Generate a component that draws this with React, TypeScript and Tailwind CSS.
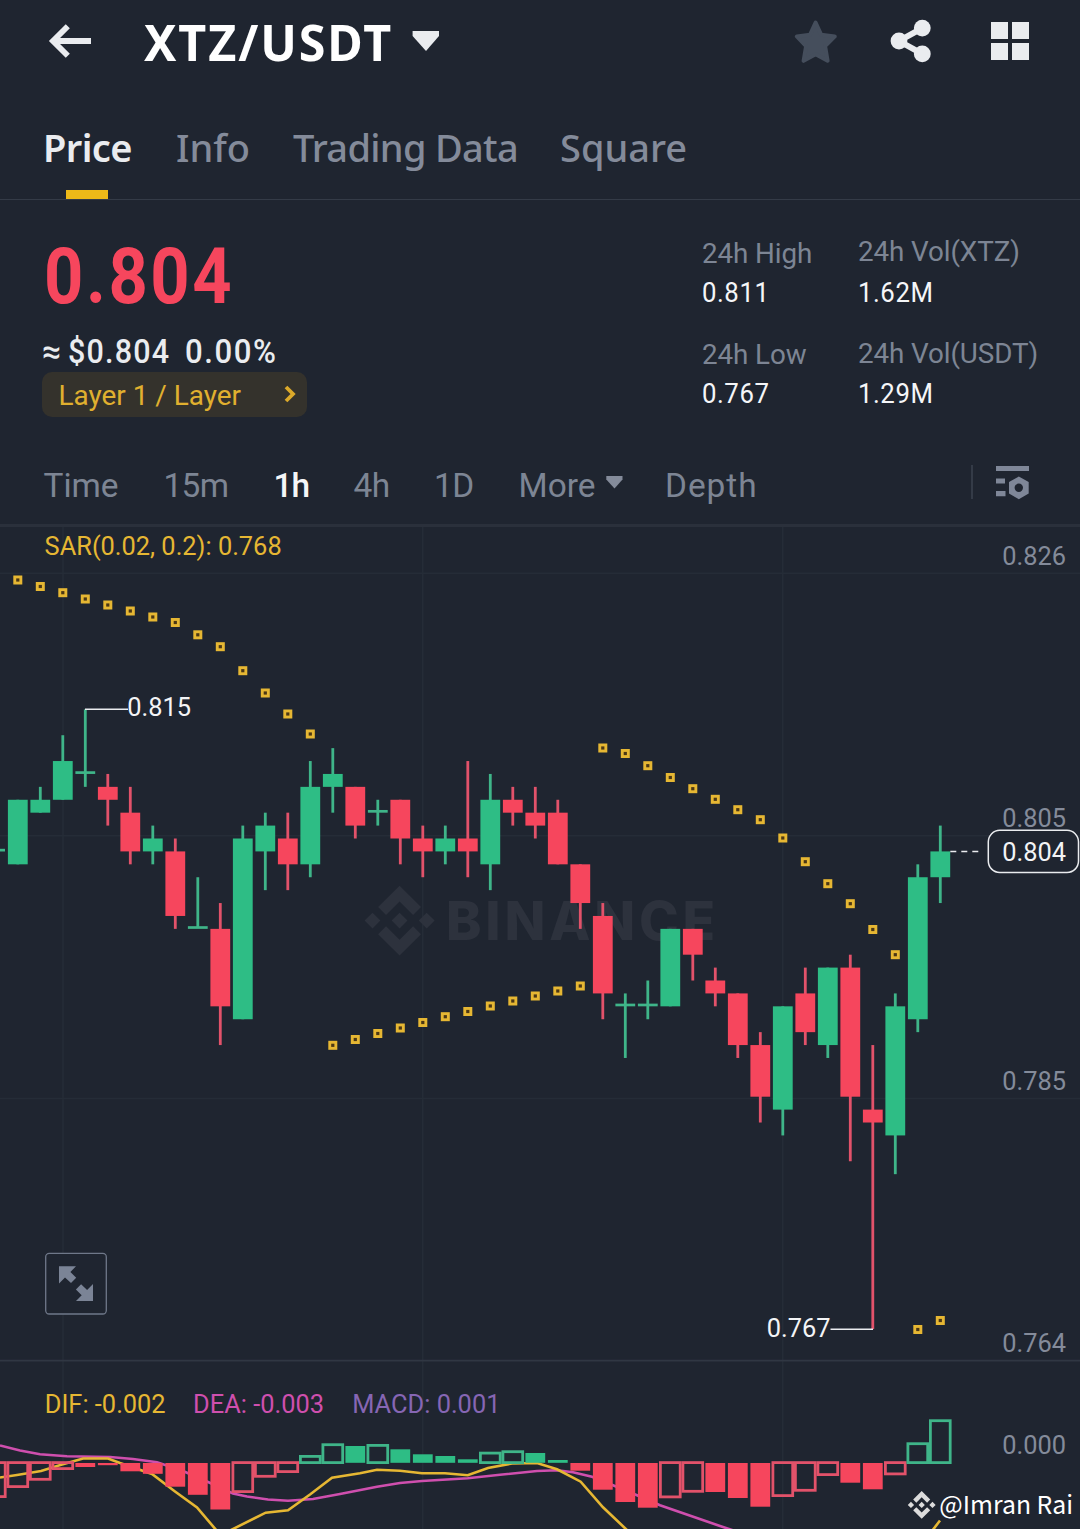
import type { ReactNode } from "react";

const BG = "#1f2530";
const GREEN = "#2ebd85";
const GREEN_LINE = "#3fb589";
const RED = "#f6465d";
const RED_LINE = "#e2526a";
const YELLOW = "#e6b733";
const MAGENTA = "#cf4fae";
const MUTED = "#848b9a";

const BINANCE_MARK =
  "M16.624 13.9202l2.7175 2.7154-7.353 7.353-7.353-7.352 2.7175-2.7164 4.6355 4.6595 4.6356-4.6595zm4.6366-4.6366L24 12l-2.7154 2.7164L18.5682 12l2.6924-2.7164zm-9.272.001l2.7163 2.6914-2.7164 2.7174v-.001L9.2721 12l2.7164-2.7154zm-9.2722-.001L5.4088 12l-2.6914 2.6924L0 12l2.7164-2.7164zM11.9885.0115l7.353 7.329-2.7174 2.7154-4.6356-4.6356-4.6355 4.6595-2.7174-2.7154 7.353-7.353z";

// [direction, body top, body bottom, high, low], prices in thousandths
type Candle = ["u" | "d", number, number, number, number];
const candles: Candle[] = [
  ["u", 808, 803, 808, 803],
  ["u", 808, 807, 809, 807],
  ["u", 811, 808, 813, 808],
  ["u", 810, 810, 815, 809],
  ["d", 809, 808, 810, 806],
  ["d", 807, 804, 809, 803],
  ["u", 805, 804, 806, 803],
  ["d", 804, 799, 805, 798],
  ["u", 798, 798, 802, 798],
  ["d", 798, 792, 800, 789],
  ["u", 805, 791, 806, 791],
  ["u", 806, 804, 807, 801],
  ["d", 805, 803, 807, 801],
  ["u", 809, 803, 811, 802],
  ["u", 810, 809, 812, 807],
  ["d", 809, 806, 809, 805],
  ["u", 807, 807, 808, 806],
  ["d", 808, 805, 808, 803],
  ["d", 805, 804, 806, 802],
  ["u", 805, 804, 806, 803],
  ["d", 805, 804, 811, 802],
  ["u", 808, 803, 810, 801],
  ["d", 808, 807, 809, 806],
  ["d", 807, 806, 809, 805],
  ["d", 807, 803, 808, 803],
  ["d", 803, 800, 803, 798],
  ["d", 799, 793, 800, 791],
  ["u", 792, 792, 793, 788],
  ["u", 792, 792, 794, 791],
  ["u", 798, 792, 798, 792],
  ["d", 798, 796, 798, 794],
  ["d", 794, 793, 795, 792],
  ["d", 793, 789, 793, 788],
  ["d", 789, 785, 790, 783],
  ["u", 792, 784, 792, 782],
  ["d", 793, 790, 795, 789],
  ["u", 795, 789, 795, 788],
  ["d", 795, 785, 796, 780],
  ["d", 784, 783, 789, 767],
  ["u", 792, 782, 793, 779],
  ["u", 802, 791, 803, 790],
  ["u", 804, 802, 806, 800],
];

const sar = [
  580, 586.5, 592.7, 599, 605, 611, 617, 622.5, 634.8, 646.7, 670.7, 693, 714, 734, 1045.3, 1039.5, 1033.5, 1028,
  1022.5, 1016.7, 1011.5, 1006, 1001, 996, 991, 986, 748, 753.5, 765.7, 777.5, 788.7, 799.3, 809.7, 819.7, 838, 861.7,
  883.7, 903.7, 929.5, 954.7, 1329.5, 1320.5,
];

// [filled?, outer edge y]; bars grow from the zero line
const macd: [boolean, number][] = [
  [false, 1498], [false, 1488], [false, 1480.7], [false, 1470], [true, 1467], [true, 1465.2], [true, 1471.3],
  [true, 1473.8], [true, 1486.7], [true, 1494.8], [true, 1509.5], [false, 1493], [false, 1477.7], [false, 1473],
  [false, 1455], [false, 1443.3], [true, 1446], [false, 1444], [true, 1449.3], [true, 1454.3], [true, 1456],
  [true, 1459.3], [false, 1451.7], [false, 1450.3], [true, 1453], [true, 1460], [true, 1470.7], [true, 1489.7],
  [true, 1502], [true, 1507.7], [false, 1498.3], [false, 1492.7], [true, 1492], [true, 1498], [true, 1506.7],
  [false, 1497], [false, 1491.7], [false, 1476], [true, 1482.7], [true, 1489.3], [false, 1475.3], [false, 1442.3],
  [false, 1419.3],
];

const dif =
  "0,1477.5 17,1475 41,1471 62,1464.5 83,1458.5 108,1458.5 120,1463 152,1474 175,1491.5 197,1507.5 217,1531 M 229,1531 265.7,1512.7 288,1510.3 310,1494.5 332,1477.7 360,1473.3 377,1469.7 400,1470.7 422,1473.3 445,1473.3 467.7,1475.3 488,1468 512,1463.5 537,1463 557,1469.3 580.7,1481.7 603,1507.3 628,1531 M 932,1531 940,1520.5";
const dea =
  "0,1445.5 20,1450.5 40,1454.3 67,1456.3 110,1457 133,1459 157,1462.3 183,1471 208,1482 233,1493.5 247,1496.5 268,1499.5 288,1500.7 313,1499 340,1494 377,1486.7 400,1483 422,1481 467.7,1478.3 500,1474.8 537,1471 557,1470.3 573,1472.3 592,1476.7 613,1485.3 637,1495.3 660,1505.3 720,1526 735,1531";

const xAt = (i: number) => 17.8 + 22.5 * i;
const yAt = (p: number) => 709.4 + (815 - p) * 12.91;

function Candles() {
  return (
    <g>
      {candles.map(([dir, top, bottom, high, low], i) => {
        const x = xAt(i);
        const fill = dir === "u" ? GREEN : RED;
        const line = dir === "u" ? GREEN_LINE : RED_LINE;
        const flat = top === bottom;
        const y = flat ? yAt(top) - 2.7 : yAt(top);
        return (
          <g key={i}>
            <rect x={x - 1.4} y={yAt(high)} width={2.8} height={yAt(low) - yAt(high) - (flat && low === bottom ? 1 : 0)} fill={line} />
            <rect x={x - 9.9} y={y} width={19.8} height={flat ? 2.7 : yAt(bottom) - yAt(top)} fill={flat ? line : fill} />
          </g>
        );
      })}
      <rect x={0} y={848.8} width={5} height={2.7} fill={GREEN_LINE} />
    </g>
  );
}

function Macd() {
  return (
    <g>
      {macd.map(([filled, edge], n) => {
        const x = xAt(n - 1);
        const up = edge < 1462;
        if (filled) {
          const top = up ? edge : 1463;
          return <rect key={n} x={x - 9.9} y={top} width={19.8} height={Math.abs((up ? 1462.8 : edge) - top)} fill={up ? GREEN : RED} />;
        }
        const top = up ? edge + 1.4 : 1462.6;
        const bottom = up ? 1462.6 : edge - 1.4;
        return (
          <rect key={n} x={x - 9.9} y={top} width={19.8} height={bottom - top} fill="none" stroke={up ? GREEN_LINE : RED_LINE} strokeWidth={2.8} />
        );
      })}
    </g>
  );
}

function Chart() {
  return (
    <svg viewBox="0 527 1080 1002" className="block h-[1002px] w-[1080px] font-['Roboto',sans-serif] text-[25.4px]">
      <g stroke="#252c37" strokeWidth={1.6}>
        <path d="M63 527V1529M422.7 527V1529M782.7 527V1529" />
        <path d="M0 573.2H1080M0 835.8H1080M0 1098.5H1080" />
      </g>
      <path d="M0 1360.6H1080" stroke="#303743" strokeWidth={1.6} />

      <g fill="#2d323d">
        <path d={BINANCE_MARK} transform="translate(364.6 885.6) scale(2.917)" />
        <text x={446} y={940} className="font-['Inter',sans-serif] text-[53.5px] font-extrabold tracking-[3.8px]">BINANCE</text>
      </g>

      <Candles />
      <g>
        {sar.map((y, i) => (
          <g key={i}>
            <rect x={xAt(i) - 4.5} y={y - 4.5} width={9} height={9} fill={YELLOW} />
            <rect x={xAt(i) - 1.6} y={y - 1.6} width={3.2} height={3.2} fill="#4b3714" />
          </g>
        ))}
      </g>

      <g stroke="#eaecef" strokeWidth={1.5} fill="none">
        <path d="M85 709.3H128M830.5 1329.3H873" />
        <path d="M950.3 851.4H979" strokeDasharray="6 5" />
        <rect x={988.3} y={830.3} width={90.2} height={42.2} rx={11.5} fill={BG} />
      </g>
      <g fill="#f3f4f6">
        <text x={127.3} y={716}>0.815</text>
        <text x={766.8} y={1337}>0.767</text>
        <text x={1002.3} y={861}>0.804</text>
      </g>
      <g fill={MUTED}>
        <text x={1002.3} y={565}>0.826</text>
        <text x={1002.3} y={827}>0.805</text>
        <text x={1002.3} y={1090}>0.785</text>
        <text x={1002.3} y={1352}>0.764</text>
        <text x={1002.3} y={1454}>0.000</text>
      </g>
      <text x={44.6} y={555} fill={YELLOW}>SAR(0.02, 0.2): 0.768</text>

      <rect x={45.7} y={1253.4} width={60.6} height={60.6} rx={3.5} fill={BG} stroke="#6f7889" strokeWidth={1.3} />
      <g fill="#7b8496">
        <path d="M59 1266.3H76L70.4 1271.9L76.2 1277.7L71 1283L65 1277.4L59 1283.4Z" />
        <path d="M93 1301H76L81.7 1295.3L75.9 1289.5L81.1 1284.2L87.1 1289.9L93 1284Z" />
      </g>

      <text x={44.8} y={1413} fill={YELLOW}>DIF: -0.002</text>
      <text x={193.1} y={1413} fill={MAGENTA}>DEA: -0.003</text>
      <text x={352.2} y={1413} fill="#8666b4">MACD: 0.001</text>
      <path d={"M " + dea} fill="none" stroke={MAGENTA} strokeWidth={2.6} />
      <path d={"M " + dif} fill="none" stroke={YELLOW} strokeWidth={2.6} />
      <Macd />

      <path d={BINANCE_MARK} transform="translate(907.8 1491) scale(1.16)" fill="#dcdcdc" />
      <text x={939.3} y={1513.5} fill="#ffffff" className="font-['Noto_Sans_CJK_SC',sans-serif] text-[24.8px]">@Imran Rai</text>
    </svg>
  );
}

function Header() {
  return (
    <header className="flex h-[84px] items-center">
      <svg viewBox="46 20 50 42" className="-mt-[2px] ml-[46px] h-[42px] w-[50px]" fill="none" stroke="#eaecef">
        <path d="M91 41H53" strokeWidth={5.8} />
        <path d="M67.8 26.3L53 41L67.8 55.7" strokeWidth={5.8} />
      </svg>
      <h1 className="-mt-[2px] ml-[48px] w-[269px] origin-left scale-x-[0.95] font-['Noto_Sans',sans-serif] text-[51px] leading-[60px] font-bold tracking-[2px] whitespace-nowrap text-white">XTZ/USDT</h1>
      <svg viewBox="412 30 28 22" className="-mt-[2px] -ml-px h-[22px] w-7" fill="#eaecef">
        <path d="M412.6 31H439V36L426 51L412.6 36Z" />
      </svg>
      <svg viewBox="793 18 45 46" className="-mt-px ml-[353px] h-[46px] w-[45px] shrink-0" fill="#454e5c" stroke="#454e5c" strokeWidth={4} strokeLinejoin="round">
        <path d="M815.6 21.6L821.2 33.8L834.8 35.4L825.1 45L827.6 59.8L815.6 53.3L803.6 59.8L806.1 45L796.8 35.4L810 33.8Z" />
      </svg>
      <svg viewBox="888 18 46 46" className="-mt-[2px] ml-[50px] h-[46px] w-[46px] shrink-0" fill="#eaecef" stroke="none">
        <circle cx={922.3} cy={28.1} r={8.4} />
        <circle cx={899} cy={41} r={8.4} />
        <circle cx={922.3} cy={53.9} r={8.4} />
        <path d="M922.3 28.1L899 41L922.3 53.9" fill="none" stroke="#eaecef" strokeWidth={6} />
      </svg>
      <div className="mt-[-2px] ml-[57px] grid shrink-0 grid-cols-2 gap-1">
        <i className="h-[17px] w-[17px] bg-[#eaecef]" />
        <i className="h-[17px] w-[17px] bg-[#eaecef]" />
        <i className="h-[17px] w-[17px] bg-[#eaecef]" />
        <i className="h-[17px] w-[17px] bg-[#eaecef]" />
      </div>
    </header>
  );
}

function Tabs() {
  return (
    <nav className="flex h-[116px] border-b border-[#343b47] pl-[43px] font-['Noto_Sans',sans-serif] text-[38px] leading-[48px] font-medium whitespace-nowrap text-[#848b9a]">
      <div className="flex w-[133px] flex-col text-[#eaecef]">
        <span className="mt-[39px] font-semibold tracking-[-0.6px]">Price</span>
        <i className="mt-auto ml-[23px] h-[9px] w-[42px] bg-[#edb918]" />
      </div>
      <span className="mt-[39px] w-[117px]">Info</span>
      <span className="mt-[39px] w-[267px] tracking-[-0.7px]">Trading Data</span>
      <span className="mt-[39px]">Square</span>
    </nav>
  );
}

function Label({ children }: { children: ReactNode }) {
  return <dt className="text-[27.8px] tracking-[-0.1px] text-[#7d8594]">{children}</dt>;
}

function Value({ children }: { children: ReactNode }) {
  return <dd className="origin-left scale-x-[0.92] pt-px -mb-px text-[28px] tracking-[0.6px] text-[#f5f6f8]">{children}</dd>;
}

function Summary() {
  return (
    <section className="flex h-[248px] justify-between whitespace-nowrap">
      <div className="ml-[42px] pt-[38px]">
        <div className="ml-[2px] origin-left scale-x-[0.88] text-[78px] leading-[78px] font-bold tracking-[2.9px] text-[#f6465d]">0.804</div>
        <div className="mt-[15px] -mb-px flex h-[42px] items-center text-[33.5px] leading-[42px] font-medium text-[#eaecef]">
          <span className="w-[26px]">≈</span>
          <span className="w-[116.5px] origin-left scale-x-[0.91] tracking-[1.3px]">$0.804</span>
          <span className="origin-left scale-x-[0.93] tracking-[1.7px]">0.00%</span>
        </div>
        <div className="flex h-[45px] w-[265px] items-center justify-between rounded-[10px] bg-[#34322c] pr-[11px] pl-[16.5px] text-[#e0b02f]">
          <span className="pt-[2px] text-[27.9px] leading-[40px]">Layer 1 / Layer</span>
          <svg viewBox="0 0 12 18" className="-mt-px h-[18px] w-3" fill="none" stroke="#dba92a" strokeWidth={3.8}>
            <path d="M2 2L9 9L2 16" />
          </svg>
        </div>
      </div>
      <div className="mr-[41.5px] flex">
        <dl className="w-[156px] pt-[35px] leading-[38px]">
          <Label>24h High</Label>
          <Value>0.811</Value>
          <div className="h-[25px]" />
          <Label>24h Low</Label>
          <Value>0.767</Value>
        </dl>
        <dl className="w-[180.5px] pt-[32px] leading-[39.5px]">
          <Label>24h Vol(XTZ)</Label>
          <Value>1.62M</Value>
          <div className="h-[22.5px]" />
          <Label>24h Vol(USDT)</Label>
          <Value>1.29M</Value>
        </dl>
      </div>
    </section>
  );
}

function Intervals() {
  return (
    <div className="flex h-[76px] items-center pt-px pl-[43.5px] text-[33.4px] whitespace-nowrap text-[#7d8594]">
      <span className="w-[120px]">Time</span>
      <span className="w-[110px] tracking-[-0.7px]">15m</span>
      <span className="w-[80px] tracking-[-0.9px] font-medium text-[#f5f6f8]">1h</span>
      <span className="w-[80.5px] tracking-[-0.5px]">4h</span>
      <span className="w-[84.5px] tracking-[-0.5px]">1D</span>
      <span className="w-[87px]">More</span>
      <svg viewBox="0 0 17 13" className="-mt-[9px] h-[13px] w-[17px]" fill="#848b9a">
        <path d="M0.3 0H16.5V3.5L8.5 12.6L0.3 3.5Z" />
      </svg>
      <span className="ml-[42.5px] tracking-[1px]">Depth</span>
      <i className="-mt-[10px] ml-auto h-[34px] w-[2px] bg-[#343b47]" />
      <svg viewBox="995 465 35 35" className="mr-[50px] ml-[22.5px] -mt-[9px] h-[35px] w-[35px]" fill="#7f8798">
        <path d="M996 466H1029V471H996ZM996 478.4H1005V483.6H996ZM996 491H1005.5V496.2H996Z" />
        <path fillRule="evenodd" d="M1018.8 476.6L1028.7 482V493.6L1018.8 499.2L1009 493.6V482ZM1018.8 483.6A4.2 4.2 0 1 0 1018.8 492A4.2 4.2 0 1 0 1018.8 483.6Z" />
      </svg>
    </div>
  );
}

export default function App() {
  return (
    <main className="h-[1529px] w-[1080px] overflow-hidden bg-[#1f2530] font-['Roboto',sans-serif]">
      <Header />
      <Tabs />
      <Summary />
      <Intervals />
      <div className="h-[3px] bg-[#2a303b]" />
      <Chart />
    </main>
  );
}
